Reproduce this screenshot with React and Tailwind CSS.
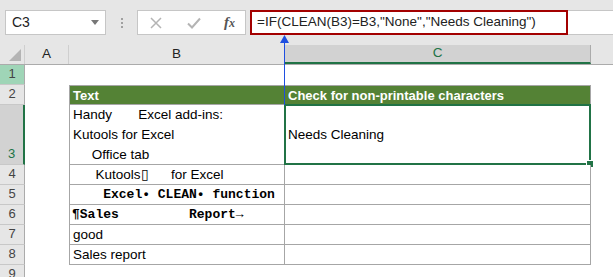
import React from "react";

const F = { fontFamily: '"Liberation Sans", Arial, sans-serif' };
const M = { fontFamily: '"Liberation Mono", "DejaVu Sans Mono", monospace' };

function RowHead({ n, h, kind }) {
  let cls = "bg-[#e6e6e6] text-[#444] border-r border-[#ababab]";
  if (kind === "hl") cls = "bg-[#9fd5b7] text-[#444] border-r border-[#ababab]";
  if (kind === "sel") cls = "bg-[#d2d2d2] text-[#217346] border-r-2 border-[#217346]";
  return (
    <div
      className={`w-[25px] shrink-0 flex items-end justify-center border-b border-b-[#c8c8c8] text-[13px] leading-[20px] ${cls}`}
      style={{ height: h }}
    >
      {n}
    </div>
  );
}

function Row({ n, h = 20, kind, b, c, bCls = "", bStyle, top = false, header = false, selected = false }) {
  const bd = header ? "" : "bg-white";
  return (
    <div className="flex" style={{ height: h }}>
      <RowHead n={n} h={h} kind={kind} />
      <div className="w-[44px] shrink-0 bg-white" />
      {b === undefined ? (
        <div className="flex-1 bg-white" />
      ) : (
        <>
          <div
            className={`w-[216px] shrink-0 border-l border-r border-b border-[#a6a6a6] ${top ? "border-t" : ""} ${header ? "bg-[#548235] text-white font-bold text-[13px]" : bd} px-[3px] leading-[20px] whitespace-pre overflow-hidden ${bCls}`}
            style={bStyle}
          >
            {b}
          </div>
          <div
            className={`relative w-[306px] shrink-0 border-r border-b border-[#a6a6a6] ${top ? "border-t" : ""} ${header ? "bg-[#548235] text-white font-bold text-[13px]" : bd} px-[3px] leading-[20px] whitespace-pre flex ${header ? "items-start" : "items-center"}`}
          >
            {c}
            {selected && (
              <>
                <div className="absolute -left-[1px] -top-[1px] -right-[1px] -bottom-[1px] border-2 border-[#217346]" />
                <div className="absolute -right-[4px] -bottom-[4px] w-[6px] h-[6px] bg-[#217346] border border-white box-content" />
              </>
            )}
          </div>
          <div className="flex-1 bg-white" />
        </>
      )}
    </div>
  );
}

export default function App() {
  return (
    <div className="relative w-[613px] h-[277px] overflow-hidden bg-white text-[13.5px] text-black" style={F}>
      {/* toolbar */}
      <div className="h-[45px] bg-[#e6e6e6] flex items-start pt-[10px]">
        <div className="ml-[5px] w-[101px] h-[25px] bg-white border border-[#c6c6c6] flex items-center pl-[6px] pr-[6px] text-[14px] text-[#222]">
          <span className="flex-1">C3</span>
          <svg width="8" height="5" viewBox="0 0 8 5"><path d="M0 0h8L4 5z" fill="#777" /></svg>
        </div>
        <div className="w-[31px] h-[25px] flex flex-col items-center justify-center gap-[2px]">
          <div className="w-[2px] h-[2px] bg-[#a0a0a0]" />
          <div className="w-[2px] h-[2px] bg-[#a0a0a0]" />
          <div className="w-[2px] h-[2px] bg-[#a0a0a0]" />
        </div>
        <div className="w-[109px] h-[25px] bg-white border border-[#c6c6c6] flex items-center">
          <svg className="ml-[12px]" width="12" height="12" viewBox="0 0 12 12">
            <path d="M1 1L11 11M11 1L1 11" stroke="#b4b4b4" strokeWidth="1.5" />
          </svg>
          <svg className="ml-[25px]" width="14" height="12" viewBox="0 0 14 12">
            <path d="M1 6.5L5 10.5L13 1.5" stroke="#b4b4b4" strokeWidth="2" fill="none" />
          </svg>
          <span
            className="ml-[23px] italic font-bold text-[15px] text-[#555]"
            style={{ fontFamily: '"Liberation Serif", serif' }}
          >
            f<span className="text-[12px]">x</span>
          </span>
        </div>
        <div className="ml-[4px] flex-1 h-[25px] bg-white border-y border-[#c6c6c6] flex">
          <div className="w-[318px] -mt-[1px] h-[25px] border-2 border-[#a30000] flex items-center pl-[5px] text-[13.5px] text-[#222] whitespace-pre">
            =IF(CLEAN(B3)=B3,"None","Needs Cleaning")
          </div>
        </div>
      </div>
      {/* column headers */}
      <div className="flex h-[20px] bg-[#e6e6e6] border-b border-[#ababab] text-[13.5px] text-[#222]">
        <div className="w-[25px] shrink-0 border-r border-[#cfcfcf] relative">
          <svg className="absolute right-[3px] bottom-[3px]" width="12" height="12" viewBox="0 0 12 12">
            <path d="M12 0V12H0z" fill="#b4b4b4" />
          </svg>
        </div>
        <div className="w-[44px] shrink-0 border-r border-[#cfcfcf] flex items-center justify-center">A</div>
        <div className="w-[216px] shrink-0 border-r border-[#cfcfcf] flex items-center justify-center">B</div>
        <div className="w-[306px] shrink-0 bg-[#d2d2d2] border-r border-[#ababab] border-b-2 border-b-[#217346] flex items-center justify-center text-[#217346]">C</div>
        <div className="flex-1" />
      </div>
      {/* rows */}
      <Row n="1" kind="hl" />
      <Row n="2" b="Text" c="Check for non-printable characters" header top />
      <Row
        n="3"
        h={60}
        kind="sel"
        b={"Handy       Excel add-ins:\nKutools for Excel\n     Office tab"}
        c="Needs Cleaning"
        selected
      />
      <Row n="4" b={"      Kutools\u25AF      for Excel"} />
      <Row
        n="5"
        b={"    Excel\u2022 CLEAN\u2022 function"}
        bCls="font-bold text-[13px] !px-[2px]"
        bStyle={M}
      />
      <Row
        n="6"
        b={"\u00B6Sales         Report\u2192"}
        bCls="font-bold text-[13px] !px-[2px]"
        bStyle={M}
      />
      <Row n="7" b="good" />
      <Row n="8" b="Sales report" />
      <Row n="9" />
      {/* blue arrow annotation */}
      <div className="absolute left-[284px] top-[37px] w-[1px] h-[68px] bg-[#1f4fe0]" />
      <svg className="absolute left-[280px] top-[35px]" width="9" height="8" viewBox="0 0 9 8">
        <path d="M4.5 0L9 8H0z" fill="#1f4fe0" />
      </svg>
    </div>
  );
}
